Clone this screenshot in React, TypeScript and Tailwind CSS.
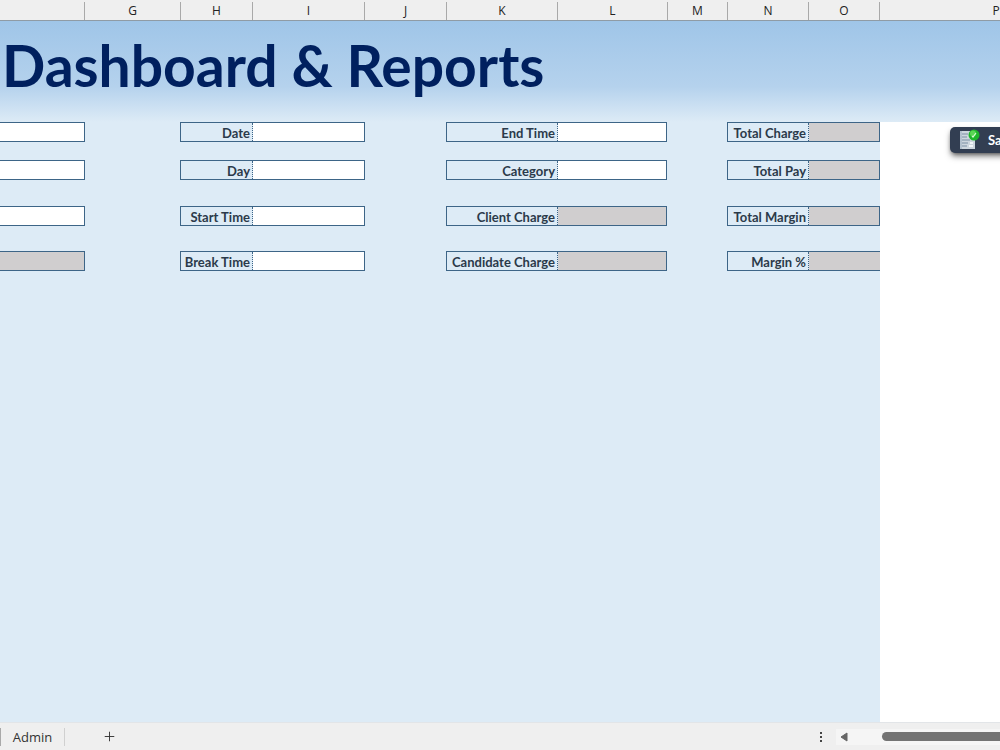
import { Plus } from 'lucide-react';
import { clsx } from 'clsx';

interface Field {
  label: string;
  readOnly?: boolean;
}

interface FieldGroup {
  id: string;
  className: string;
  labelClassName: string;
  fields: Field[];
}

const columns = [
  { name: '', className: 'w-[85px]' },
  { name: 'G', className: 'w-[96px]' },
  { name: 'H', className: 'w-[72px]' },
  { name: 'I', className: 'w-[112px]' },
  { name: 'J', className: 'w-[82px]' },
  { name: 'K', className: 'w-[111px]' },
  { name: 'L', className: 'w-[110px]' },
  { name: 'M', className: 'w-[60px]' },
  { name: 'N', className: 'w-[81px]' },
  { name: 'O', className: 'w-[71px]' },
  { name: 'P', className: 'min-w-[232px] grow' },
];

const groups: FieldGroup[] = [
  {
    id: 'schedule',
    className: 'w-[185px] ml-[95px]',
    labelClassName: 'w-[72px]',
    fields: [{ label: 'Date' }, { label: 'Day' }, { label: 'Start Time' }, { label: 'Break Time' }],
  },
  {
    id: 'charges',
    className: 'w-[221px] ml-[81px]',
    labelClassName: 'w-[111px]',
    fields: [
      { label: 'End Time' },
      { label: 'Category' },
      { label: 'Client Charge', readOnly: true },
      { label: 'Candidate Charge', readOnly: true },
    ],
  },
  {
    id: 'totals',
    className: 'w-[153px] ml-[60px]',
    labelClassName: 'w-[81px]',
    fields: [
      { label: 'Total Charge', readOnly: true },
      { label: 'Total Pay', readOnly: true },
      { label: 'Total Margin', readOnly: true },
      { label: 'Margin %', readOnly: true },
    ],
  },
];

const rowGrid = 'grid grid-rows-[38px_46px_45px_20px] items-start';

function ColumnHeaders() {
  return (
    <div className="flex h-[21px] shrink-0 items-end border-b border-[#8f9ba5] bg-[#efefef] font-['Open_Sans',sans-serif] text-xs text-[#222]">
      {columns.map((column) => (
        <div
          key={column.name}
          className={clsx(
            'flex h-[18px] shrink-0 items-center justify-center leading-[18px]',
            column.name !== 'P' && 'border-r border-[#a9a9a9]',
            column.className,
          )}
        >
          {column.name}
        </div>
      ))}
    </div>
  );
}

function FormGroup({ group }: { group: FieldGroup }) {
  return (
    <div className={clsx('shrink-0', rowGrid, group.className)}>
      {group.fields.map((field) => {
        const id = `${group.id}-${field.label.toLowerCase().replace(/\W+/g, '-')}`;
        return (
          <div
            key={id}
            className={clsx('flex h-5 border border-[#3d6587]', field.label === 'Margin %' && 'border-r-0')}
          >
            <label
              htmlFor={id}
              className={clsx(
                'shrink-0 whitespace-nowrap border-r border-dotted border-[#3d6587] pr-0.5 text-right text-[13px] leading-5 font-bold text-[#2b3a4a]',
                group.labelClassName,
              )}
            >
              {field.label}
            </label>
            <input
              id={id}
              readOnly={field.readOnly}
              className={clsx('w-full min-w-0 px-1 text-[13px] outline-none', field.readOnly ? 'bg-[#d0cecf]' : 'bg-white')}
            />
          </div>
        );
      })}
    </div>
  );
}

function SaveIcon() {
  return (
    <svg width="22" height="22" viewBox="0 0 22 22" className="shrink-0" aria-hidden="true">
      <path d="M2 2h15v18H2z" fill="#cdd6de" />
      <path d="M2 2h2v18H2z" fill="#b3c1ce" />
      <path d="M4 5h6M4 8h5M4 11h8M4 14h6M4 17h5" stroke="#7b8fa4" strokeWidth="1" />
      <path d="M12 14h3M11 17h4" stroke="#f2f5f8" strokeWidth="2" />
      <circle cx="16" cy="6" r="5.5" fill="#1fb62c" />
      <circle cx="15" cy="4.500" r="3" fill="#5bd655" />
      <path d="M14 7l1 1 3-4" fill="none" stroke="#d6fbd3" strokeWidth="1.200" />
    </svg>
  );
}

function SheetBar() {
  return (
    <footer className="flex h-7 shrink-0 items-center border-t border-[#e2e5e8] bg-[#efefef] font-['Open_Sans',sans-serif] text-[13px] text-[#333]">
      <button type="button" className="h-[18px] w-[65px] border-x border-l-[#a9a9a9] border-r-[#d0d0d0] leading-4">
        Admin
      </button>
      <button type="button" aria-label="New sheet" className="ml-[37px]">
        <Plus size={15} strokeWidth={1.5} />
      </button>
      <div className="ml-auto flex w-[184px] shrink-0 items-center">
        <svg width="10" height="12" viewBox="0 0 10 12" aria-hidden="true">
          <path d="M4 1h2v2H4zM4 5h2v2H4zM4 9h2v2H4z" fill="#444" />
        </svg>
        <div className="ml-2.5 flex h-4 grow items-center bg-[#f5f5f5]">
          <button type="button" aria-label="Scroll left" className="ml-1">
            <svg width="8" height="10" viewBox="0 0 8 10">
              <path d="M7 1v8L1 5z" fill="#666" stroke="#666" strokeLinejoin="round" />
            </svg>
          </button>
          <div className="ml-[34px] h-[9px] grow rounded-l-full bg-[#737373]" />
        </div>
      </div>
    </footer>
  );
}

export default function App() {
  return (
    <div className="flex h-screen flex-col overflow-hidden bg-white font-['Lato',sans-serif]">
      <ColumnHeaders />
      <header className="flex h-[101px] shrink-0 items-center bg-linear-to-b from-[#9fc5e8] via-[#b5d2ed] via-65% to-[#ddebf6] pb-3.5 pl-0.5">
        <h1 className="whitespace-nowrap text-[57px] leading-[60px] font-bold text-[#00205f]">Dashboard &amp; Reports</h1>
      </header>
      <main className="flex min-h-0 grow">
        <form className="flex w-[880px] shrink-0 items-start bg-[#ddebf6]">
          <div className={clsx('w-[85px] shrink-0', rowGrid)}>
            {['Field 1', 'Field 2', 'Field 3', 'Field 4'].map((name, index) => (
              <input
                key={name}
                aria-label={name}
                readOnly={index === 3}
                className={clsx(
                  'h-5 w-full border border-l-0 border-[#3d6587] px-1 text-[13px] outline-none',
                  index === 3 ? 'bg-[#d0cecf]' : 'bg-white',
                )}
              />
            ))}
          </div>
          {groups.map((group) => (
            <FormGroup key={group.id} group={group} />
          ))}
        </form>
        <div className="min-w-0 grow overflow-hidden pt-[5px] pl-[70px]">
          <button
            type="button"
            className="flex h-[26px] w-[110px] items-center gap-2 rounded-[5px] bg-[#323e52] pl-2 text-[13px] leading-5 font-bold text-white shadow-md shadow-black/50"
          >
            <SaveIcon />
            Save
          </button>
        </div>
      </main>
      <SheetBar />
    </div>
  );
}
